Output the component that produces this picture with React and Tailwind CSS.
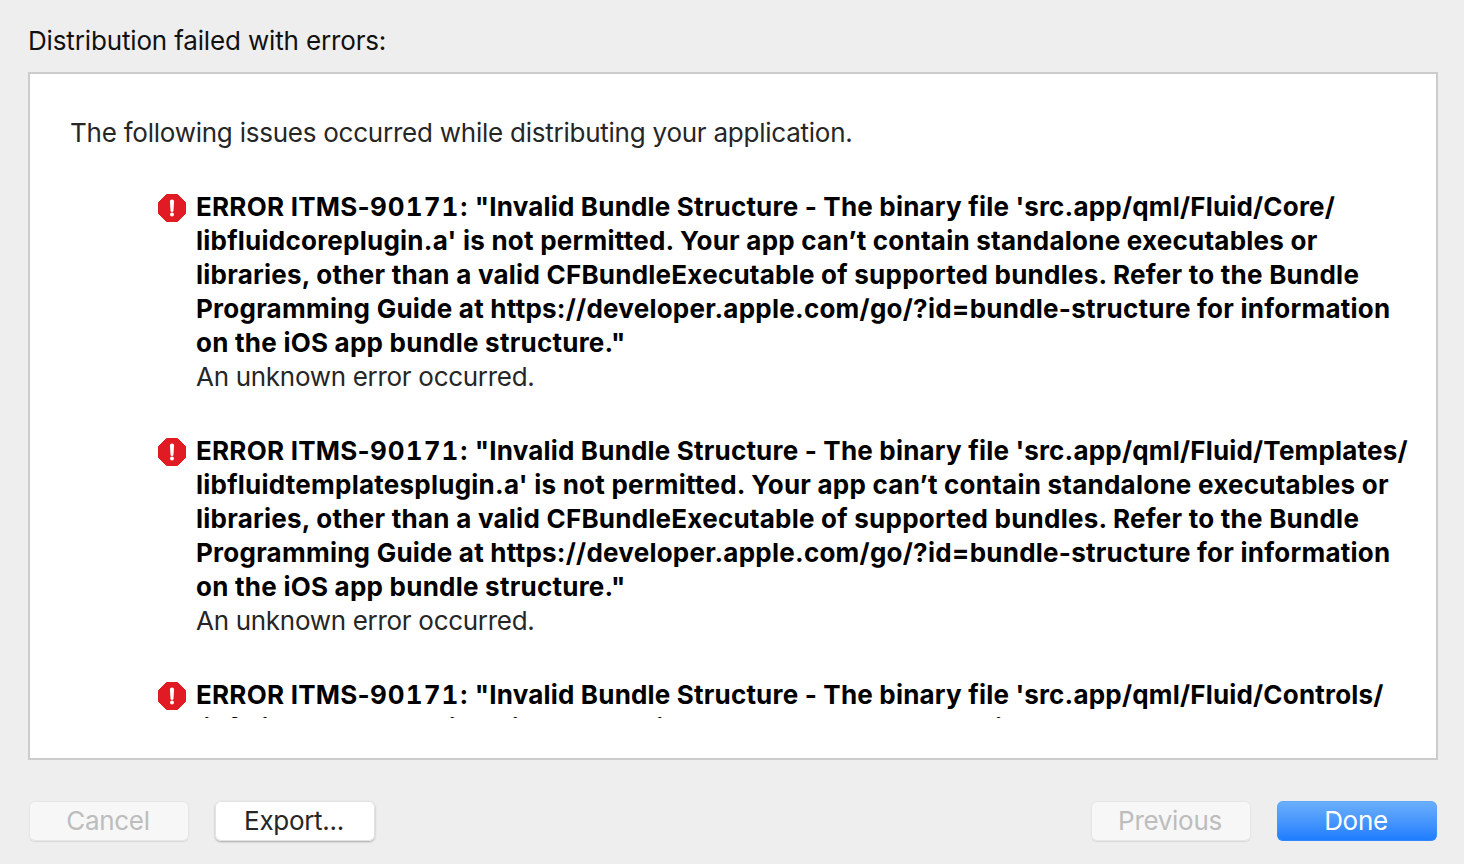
import React from 'react';

const issues = [
  {
    head: `: "Invalid Bundle Structure - The binary file 'src.app/qml/Fluid/Core/`,
    lines: [
      `libfluidcoreplugin.a' is not permitted. Your app can’t contain standalone executables or`,
      `libraries, other than a valid CFBundleExecutable of supported bundles. Refer to the Bundle`,
      `Programming Guide at https://developer.apple.com/go/?id=bundle-structure for information`,
      `on the iOS app bundle structure."`,
    ],
  },
  {
    head: `: "Invalid Bundle Structure - The binary file 'src.app/qml/Fluid/Templates/`,
    lines: [
      `libfluidtemplatesplugin.a' is not permitted. Your app can’t contain standalone executables or`,
      `libraries, other than a valid CFBundleExecutable of supported bundles. Refer to the Bundle`,
      `Programming Guide at https://developer.apple.com/go/?id=bundle-structure for information`,
      `on the iOS app bundle structure."`,
    ],
  },
  {
    head: `: "Invalid Bundle Structure - The binary file 'src.app/qml/Fluid/Controls/`,
    lines: [
      `libfluidcontrolsplugin.a' is not permitted. Your app can’t contain standalone executables or`,
      `libraries, other than a valid CFBundleExecutable of supported bundles. Refer to the Bundle`,
      `Programming Guide at https://developer.apple.com/go/?id=bundle-structure for information`,
      `on the iOS app bundle structure."`,
    ],
  },
];

const ErrorIcon = () => (
  <svg width="28" height="28" viewBox="0 0 28 28" className="block shrink-0">
    <polygon points="8.5,0.5 19.5,0.5 27.5,8.5 27.5,19.5 19.5,27.5 8.5,27.5 0.5,19.5 0.5,8.5" fill="#e01b24" stroke="#e01b24" strokeLinejoin="round" />
    <path d="M11.9 7.6a2.1 2.1 0 0 1 4.2 0l-.6 9a1.5 1.5 0 0 1-3 0z" fill="#fff" />
    <circle cx="14" cy="20.6" r="2" fill="#fff" />
  </svg>
);

const Issue = ({ head, lines }) => (
  <div className="flex gap-[10px] mb-10 ml-[88px]">
    <div className="pt-[4px]">
      <ErrorIcon />
    </div>
    <div className="whitespace-nowrap">
      <div className="font-bold text-black tracking-[0.24px]">
        <div>
          ERROR ITMS-<span className="tabular-nums tracking-[1.1px]">90171</span>
          <span className="tracking-[0.19px]">{head}</span>
        </div>
        {lines.map((line, i) => (
          <div key={i}>{line}</div>
        ))}
      </div>
      <div className="text-[#262626] tracking-[-0.3px]">An unknown error occurred.</div>
    </div>
  </div>
);

const Button = ({ label, className }) => (
  <button className={`w-40 h-10 pr-[2px] rounded-[6px] text-[26px] leading-none tracking-[-0.3px] ${className}`}>
    {label}
  </button>
);

export default function App() {
  return (
    <div className="w-[1464px] h-[864px] overflow-hidden bg-[#eeeeee] pl-7 font-['Inter','Noto_Sans',sans-serif] text-[26px] leading-[34px]">
      <div className="pt-6 pb-[14px] text-[#111111] tracking-[-0.15px]">Distribution failed with errors:</div>

      <div className="w-[1410px] h-[688px] border-2 border-[#cccccc] bg-white">
        <div className="h-[644px] overflow-hidden pt-[42px] pl-[40px]">
          <div className="mb-10 text-[#262626] tracking-[-0.24px]">The following issues occurred while distributing your application.</div>
          {issues.map((issue, i) => (
            <Issue key={i} head={issue.head} lines={issue.lines} />
          ))}
        </div>
      </div>

      <div className="flex items-center w-[1410px] mt-[41px] px-px">
        <Button label="Cancel" className="bg-[#f7f7f7] text-[#bdbdbd] shadow-[inset_0_0_0_1px_#e6e6e6,0_1px_1px_#d8d8d8]" />
        <Button label="Export..." className="ml-[26px] bg-white text-[#262626] shadow-[inset_0_0_0_1px_#e2e2e2,0_1px_2px_#a8a8a8]" />
        <Button label="Previous" className="ml-auto bg-[#f7f7f7] text-[#bdbdbd] shadow-[inset_0_0_0_1px_#e6e6e6,0_1px_1px_#d8d8d8]" />
        <Button label="Done" className="ml-[26px] bg-gradient-to-b from-[#6cb0fb] to-[#1b7bfe] text-white shadow-[inset_0_0_0_1px_#4f9cfb66]" />
      </div>
    </div>
  );
}
